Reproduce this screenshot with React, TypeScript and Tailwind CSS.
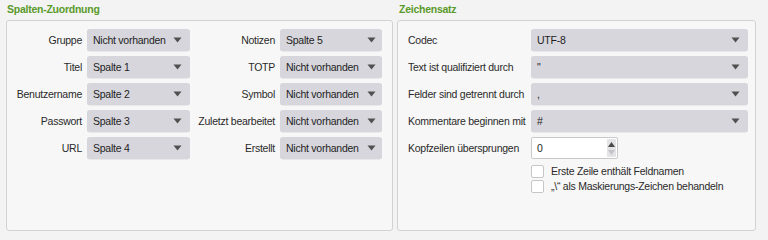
import React from "react";

const font = {
  fontFamily: '"Liberation Sans", Arial, sans-serif',
};

function Arrow() {
  return (
    <svg width="9" height="6" viewBox="0 0 9 6" className="shrink-0">
      <path d="M0.5 0.5 L8.5 0.5 L4.5 5.5 Z" fill="#505050" />
    </svg>
  );
}

function Combo({ value, arrowPad = "pr-[8px]" }: { value: string; arrowPad?: string }) {
  return (
    <div
      className={`flex h-[22px] items-center justify-between rounded-[3px] bg-[#d6d6dc] pl-[6px] ${arrowPad} text-[#1e1e1e] shadow-[0_0.5px_0_rgba(0,0,0,0.12)]`}
    >
      <span>{value}</span>
      <Arrow />
    </div>
  );
}

function Label({ children }: { children: React.ReactNode }) {
  return <div className="flex h-[22px] items-center justify-end text-[#2a2a2a] whitespace-nowrap">{children}</div>;
}

function LeftLabel({ children }: { children: React.ReactNode }) {
  return <div className="flex h-[22px] items-center text-[#2a2a2a] whitespace-nowrap">{children}</div>;
}

function Checkbox({ label }: { label: string }) {
  return (
    <div className="flex h-[15px] items-center">
      <div className="h-[13px] w-[13px] rounded-[2px] border border-[#c6c6c6] bg-white" />
      <span className="ml-[7px] text-[#2a2a2a] whitespace-nowrap">{label}</span>
    </div>
  );
}

export default function App() {
  const leftRows: [string, string, string, string][] = [
    ["Gruppe", "Nicht vorhanden", "Notizen", "Spalte 5"],
    ["Titel", "Spalte 1", "TOTP", "Nicht vorhanden"],
    ["Benutzername", "Spalte 2", "Symbol", "Nicht vorhanden"],
    ["Passwort", "Spalte 3", "Zuletzt bearbeitet", "Nicht vorhanden"],
    ["URL", "Spalte 4", "Erstellt", "Nicht vorhanden"],
  ];
  const rightRows: [string, string][] = [
    ["Codec", "UTF-8"],
    ["Text ist qualifiziert durch", '"'],
    ["Felder sind getrennt durch", ","],
    ["Kommentare beginnen mit", "#"],
  ];
  return (
    <div
      className="flex h-[240px] w-[768px] gap-[4px] bg-[#f3f3f3] pl-[6px] text-[10.5px] tracking-[-0.25px] leading-[13px]"
      style={font}
    >
      <div className="flex w-[387px] flex-col">
        <div className="h-[20px] pl-[1px] pt-[3px] font-bold text-[#5a9a2b]">Spalten-Zuordnung</div>
        <div className="h-[211px] rounded-[3px] border border-[#d2d2d2] bg-[#f7f7f7] pl-[9px] pt-[8px]">
          <div className="grid grid-cols-[66px_103px_80px_102px] gap-x-[5px] gap-y-[5px]">
            {leftRows.map((r) => (
              <React.Fragment key={r[0]}>
                <Label>{r[0]}</Label>
                <Combo value={r[1]} />
                <Label>{r[2]}</Label>
                <Combo value={r[3]} arrowPad="pr-[6px]" />
              </React.Fragment>
            ))}
          </div>
        </div>
      </div>
      <div className="flex w-[359px] flex-col">
        <div className="h-[20px] pl-[2px] pt-[3px] font-bold text-[#5a9a2b]">Zeichensatz</div>
        <div className="h-[211px] rounded-[3px] border border-[#d2d2d2] bg-[#f7f7f7] pl-[10px] pr-[7px] pt-[8px]">
          <div className="grid grid-cols-[118px_1fr] gap-x-[5px] gap-y-[5px]">
            {rightRows.map((r) => (
              <React.Fragment key={r[0]}>
                <LeftLabel>{r[0]}</LeftLabel>
                <Combo value={r[1]} />
              </React.Fragment>
            ))}
            <LeftLabel>Kopfzeilen übersprungen</LeftLabel>
            <div className="flex h-[22px] w-[87px] items-stretch rounded-[2px] border border-[#c9c9c9] bg-white">
              <div className="flex flex-1 items-center pl-[5px] text-[#1e1e1e]">0</div>
              <div className="m-[1px] flex w-[9px] flex-col items-center justify-center gap-[3px] rounded-[1px] bg-[#e4e4e6]">
                <svg width="7" height="5" viewBox="0 0 7 5">
                  <path d="M0 5 L7 5 L3.5 0 Z" fill="#4a4a4a" />
                </svg>
                <svg width="7" height="5" viewBox="0 0 7 5">
                  <path d="M0 0 L7 0 L3.5 5 Z" fill="#c4c4c8" />
                </svg>
              </div>
            </div>
            <div />
            <div className="-mt-[0px] flex flex-col gap-[0px] pt-[0px]">
              <Checkbox label="Erste Zeile enthält Feldnamen" />
              <Checkbox label="„\“ als Maskierungs-Zeichen behandeln" />
            </div>
          </div>
        </div>
      </div>
    </div>
  );
}
